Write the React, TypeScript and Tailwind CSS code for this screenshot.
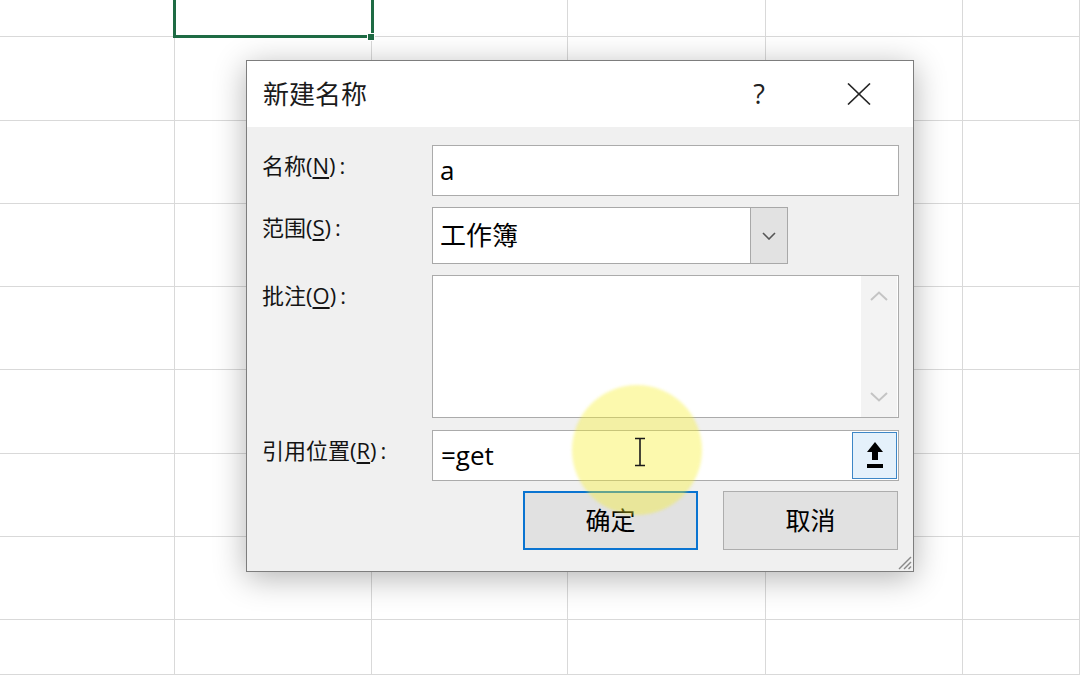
import React from "react";

const colWidths = [175, 197, 196, 198, 197, 117];
const rowHeights = [37, 84, 83, 83, 83, 84, 83, 83, 55];

const font = "font-['Open_Sans','Noto_Sans_CJK_SC',sans-serif]";

function Label({ main, keyChar }: { main: string; keyChar: string }) {
  return (
    <div className="w-[170px] shrink-0 pt-[5px] text-[22px] leading-[30px] text-[#141414]">
      {main}(<span className="underline underline-offset-[3px]">{keyChar}</span>)
      <span className="ml-[4px]">:</span>
    </div>
  );
}

function Sheet() {
  return (
    <div className="grid grid-cols-[175px_197px_196px_198px_197px_117px] grid-rows-[37px_84px_83px_83px_83px_84px_83px_83px_55px] w-[1080px] h-[675px]">
      {rowHeights.map((_, r) =>
        colWidths.map((_, c) => (
          <div
            key={`${r}-${c}`}
            className="border-r border-b border-[#d9d9d9] bg-white"
          />
        ))
      )}
    </div>
  );
}

function Chevron({ up, className }: { up?: boolean; className?: string }) {
  return (
    <svg width="18" height="10" viewBox="0 0 18 10" className={className}>
      <polyline
        points={up ? "1,9 9,1.5 17,9" : "1,1 9,8.5 17,1"}
        fill="none"
        stroke="currentColor"
        strokeWidth="2"
      />
    </svg>
  );
}

export default function App() {
  return (
    <div className={`relative w-[1080px] h-[675px] overflow-hidden bg-white ${font}`}>
      <Sheet />

      {/* selected cell */}
      <div className="absolute left-[173px] top-[-4px] w-[201px] h-[42px] border-[3px] border-[#1e6b44]" />
      <div className="absolute left-[367px] top-[33px] w-[8px] h-[8px] bg-[#1e6b44] border border-white" />

      {/* dialog */}
      <div className="absolute left-[246px] top-[60px] w-[668px] h-[512px] border border-[#7d7d7d] bg-[#f0f0f0] shadow-[0_6px_30px_rgba(0,0,0,0.3)] flex flex-col">
        <div className="h-[66px] bg-white flex items-center pl-[16px] pr-[42px]">
          <span className="text-[26px] text-[#1b1b1b]">新建名称</span>
          <span className="ml-auto mr-[82px] text-[27px] text-[#222]">?</span>
          <svg width="24" height="22" viewBox="0 0 24 22" className="text-[#222]">
            <line x1="1" y1="0.5" x2="23" y2="21.5" stroke="currentColor" strokeWidth="1.6" />
            <line x1="23" y1="0.5" x2="1" y2="21.5" stroke="currentColor" strokeWidth="1.6" />
          </svg>
        </div>

        <div className="flex-1 pl-[15px] pr-[14px] pt-[18px] flex flex-col">
          <div className="flex">
            <Label main="名称" keyChar="N" />
            <div className="flex-1 h-[51px] border border-[#ababab] bg-white flex items-center pl-[7px] text-[26px] text-black">
              a
            </div>
          </div>

          <div className="flex mt-[11px]">
            <Label main="范围" keyChar="S" />
            <div className="w-[356px] h-[57px] border border-[#a8a8a8] bg-white flex">
              <div className="flex-1 flex items-center pl-[7px] text-[26px] text-black">
                工作簿
              </div>
              <div className="w-[37px] border-l border-[#a8a8a8] bg-[#e2e2e2] flex items-center justify-center text-[#555]">
                <svg width="14" height="8" viewBox="0 0 14 8">
                  <polyline points="1,1 7,7 13,1" fill="none" stroke="currentColor" strokeWidth="1.6" />
                </svg>
              </div>
            </div>
          </div>

          <div className="flex mt-[11px]">
            <Label main="批注" keyChar="O" />
            <div className="flex-1 h-[143px] border border-[#ababab] bg-white flex justify-end">
              <div className="w-[36px] mr-[1px] bg-[#f3f3f3] flex flex-col items-center justify-between py-[15px] text-[#c4c4c4]">
                <Chevron up />
                <Chevron />
              </div>
            </div>
          </div>

          <div className="flex mt-[12px]">
            <Label main="引用位置" keyChar="R" />
            <div className="flex-1 h-[51px] border border-[#ababab] bg-white flex items-center pl-[8px] pr-[1px] text-[26px] text-black">
              <span>=get</span>
              <div className="ml-auto w-[45px] h-[47px] border border-[#3d86c6] bg-[#e5f1fb] flex items-center justify-center">
                <svg width="18" height="29" viewBox="0 0 18 29">
                  <polygon points="9,1 17,11 12,11 12,19 6,19 6,11 1,11" fill="#000" />
                  <rect x="1" y="23" width="16" height="4" fill="#000" />
                </svg>
              </div>
            </div>
          </div>

          <div className="flex justify-end gap-[25px] mt-[10px] pr-[1px]">
            <div className="w-[175px] h-[59px] border-2 border-[#0a74d1] bg-[#e1e1e1] flex items-center justify-center text-[25px] text-black">
              确定
            </div>
            <div className="w-[175px] h-[59px] border border-[#adadad] bg-[#e1e1e1] flex items-center justify-center text-[25px] text-black">
              取消
            </div>
          </div>
        </div>

        {/* resize grip */}
        <svg width="16" height="16" viewBox="0 0 16 16" className="absolute right-[1px] bottom-[1px] text-[#8a8a8a]">
          <line x1="15" y1="3" x2="3" y2="15" stroke="currentColor" strokeWidth="1.5" />
          <line x1="15" y1="8" x2="8" y2="15" stroke="currentColor" strokeWidth="1.5" />
          <line x1="15" y1="12.5" x2="12.5" y2="15" stroke="currentColor" strokeWidth="1.5" />
        </svg>
      </div>

      {/* cursor highlight */}
      <div className="absolute left-[572px] top-[385px] w-[130px] h-[130px] rounded-full bg-[rgba(246,238,40,0.38)] blur-[1.5px]" />
      <svg width="12" height="30" viewBox="0 0 12 30" className="absolute left-[634px] top-[437px]">
        <path d="M1 1.5h10M6 1.5v27M1 28.5h10" fill="none" stroke="#1a1a1a" strokeWidth="1.6" />
      </svg>
    </div>
  );
}
